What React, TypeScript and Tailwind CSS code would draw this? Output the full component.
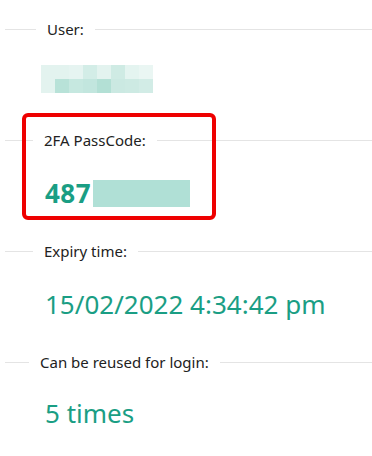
import React from 'react';

const font = { fontFamily: '"Noto Sans", "Open Sans", sans-serif' };

const Legend: React.FC<{ label: string; left: string }> = ({ label, left }) => (
  <div className="flex items-center h-5">
    <div className={`h-px bg-[#e4e4e4] ${left}`} />
    <span className="px-[11px] text-[15px] leading-5 text-[#222]">{label}</span>
    <div className="h-px bg-[#e4e4e4] flex-1" />
  </div>
);

const mosaicTop = ['#e3f3ef', '#e3f3ef', '#e6f4f1', '#d3ede7', '#e3f3ef', '#cfebe4', '#e4f4f0', '#eaf6f3'];
const mosaicBottom = ['#e3f3ef', '#b8e2d8', '#c6e8e0', '#c2e6de', '#b3e0d5', '#cbe9e2', '#cdeae3', '#d2ece6'];

const App: React.FC = () => {
  return (
    <div className="w-[372px] h-[456px] bg-white overflow-hidden pl-[5px]" style={font}>
      <div className="pt-[19px]">
        <Legend label="User:" left="w-[31px]" />
        <div className="mt-[26px] ml-[36px] flex flex-col w-[112px] h-[28px]">
          <div className="flex h-[14px]">
            {mosaicTop.map((c, i) => (
              <div key={i} className="w-[14px] h-[14px]" style={{ backgroundColor: c }} />
            ))}
          </div>
          <div className="flex h-[14px]">
            {mosaicBottom.map((c, i) => (
              <div key={i} className="w-[14px] h-[14px]" style={{ backgroundColor: c }} />
            ))}
          </div>
        </div>
      </div>

      <div className="relative mt-[37px]">
        <Legend label="2FA PassCode:" left="w-[28px]" />
        <div className="mt-[29px] ml-[40px] flex items-center h-[28px]">
          <span className="text-[26px] font-bold leading-none text-[#1a9e84] tracking-[0.5px]">487</span>
          <div className="ml-[2px] w-[97px] h-[27px] bg-[#b0e0d6]" />
        </div>
        <div className="absolute left-[17px] top-[-17px] w-[194px] h-[107px] border-4 border-[#ee0000] rounded-[6px]" />
      </div>

      <div className="mt-[34px]">
        <Legend label="Expiry time:" left="w-[28px]" />
        <div className="mt-[23px] ml-[40px] text-[26px] leading-[40px] text-[#1a9e84]">15/02/2022 4:34:42 pm</div>
      </div>

      <div className="mt-[28px]">
        <Legend label="Can be reused for login:" left="w-[24px]" />
        <div className="mt-[21px] ml-[40px] text-[26px] leading-[40px] text-[#1a9e84]">5 times</div>
      </div>
    </div>
  );
};

export default App;
